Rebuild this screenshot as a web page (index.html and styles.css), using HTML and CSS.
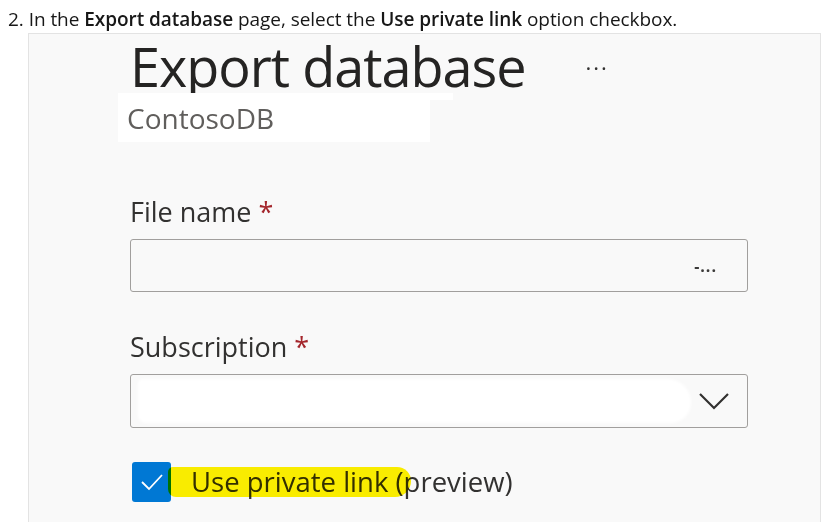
FILE: index.html
```html
<!DOCTYPE html>
<html>

<head>
    <title>Export database</title>
    <meta charset="UTF-8">
    <meta name="viewport" content="width=device-width, initial-scale=1.0">
    <link rel="stylesheet" href="styles.css">
</head>

<body>
    <p class="step">2. In the <b>Export database</b> page, select the <b>Use private link</b> option checkbox.</p>
    <div class="shot">
        <div class="blade">
            <div class="title-row">
                <h1>Export database</h1>
                <span class="more">&middot;&middot;&middot;</span>
            </div>
            <div class="subtitle">ContosoDB</div>

            <div class="field first">
                <label>File name <span class="req">*</span></label>
                <div class="box">
                    <span class="ellipsis">-...</span>
                </div>
            </div>

            <div class="field">
                <label>Subscription <span class="req">*</span></label>
                <div class="box select">
                    <span class="smudge"></span>
                    <svg class="chevron" width="32" height="18" viewBox="0 0 32 18">
                        <path d="M2 2 L16 16 L30 2" fill="none" stroke="#323130" stroke-width="2.2" />
                    </svg>
                </div>
            </div>

            <div class="check-row">
                <span class="checkbox">
                    <svg width="26" height="20" viewBox="0 0 26 20">
                        <path d="M3 10 L10 17 L23 3" fill="none" stroke="#fff" stroke-width="1.8" />
                    </svg>
                </span>
                <span class="check-label">Use private link (preview)</span>
                <!-- highlighter stroke drawn over the screenshot -->
                <span class="marker"></span>
            </div>
        </div>
    </div>
</body>

</html>
```

FILE: styles.css
```css
* {
    margin: 0;
    padding: 0;
    box-sizing: border-box;
}

html,
body {
    height: 522px;
    overflow: hidden;
}

body {
    font-family: "Open Sans", "Noto Sans", sans-serif;
    background-color: #fff;
    color: #171717;
}

.step {
    font-size: 19px;
    line-height: 24px;
    height: 33px;
    padding: 7px 0 0 8px;
    white-space: nowrap;
    letter-spacing: -0.05px;
}

.step b {
    font-weight: 600;
}

.shot {
    margin-left: 28px;
    margin-right: 10px;
    height: 489px;
    background-color: #f9f9f9;
    border: 1px solid #e3e3e3;
    border-bottom: 0;
}

.blade {
    padding-left: 101px;
    padding-right: 72px;
}

.title-row {
    display: flex;
    align-items: flex-start;
}

h1 {
    font-weight: 400;
    font-size: 54px;
    line-height: 53px;
    color: #252423;
    margin-top: 6px;
    letter-spacing: -1px;
    white-space: nowrap;
}

.more {
    margin-left: 60px;
    margin-top: 18px;
    font-size: 22px;
    line-height: 30px;
    letter-spacing: 2px;
    color: #323130;
}

.subtitle {
    position: relative;
    margin-left: -12px;
    width: 312px;
    height: 49px;
    background-color: #fff;
    font-size: 28px;
    line-height: 48px;
    padding-left: 9px;
    padding-top: 1px;
    color: #605e5c;
}

.subtitle::after {
    content: "";
    position: absolute;
    left: 312px;
    top: 0;
    width: 23px;
    height: 7px;
    background-color: #fff;
}

.field {
    margin-top: 37px;
}

.field.first {
    margin-top: 52px;
}

label {
    display: block;
    font-size: 27px;
    line-height: 36px;
    color: #323130;
    margin-bottom: 9px;
}

.req {
    color: #a4262c;
}

.box {
    position: relative;
    height: 53px;
    border: 1px solid #a19f9d;
    border-radius: 3px;
    display: flex;
    align-items: center;
    justify-content: flex-end;
    padding-right: 30px;
}

.ellipsis {
    font-size: 16px;
    font-weight: 700;
    color: #3b3a39;
    letter-spacing: 1px;
}

.select {
    height: 54px;
    padding-right: 17px;
}

.smudge {
    position: absolute;
    left: 7px;
    top: 4px;
    width: 553px;
    height: 44px;
    background-color: #fff;
    border-radius: 6px 30px 26px 10px;
    filter: blur(1.5px);
}

.chevron {
    position: relative;
}

.check-row {
    position: relative;
    display: flex;
    align-items: center;
    gap: 20px;
    margin-top: 34px;
    margin-left: 2px;
}

.checkbox {
    width: 39px;
    height: 40px;
    background-color: #0078d4;
    border-radius: 3px;
    display: flex;
    align-items: center;
    justify-content: center;
}

.check-label {
    font-size: 27.5px;
    line-height: 38px;
    color: #323130;
}

.marker {
    position: absolute;
    left: 36px;
    top: 5px;
    width: 243px;
    height: 30px;
    background-color: #fff200;
    mix-blend-mode: multiply;
    border-radius: 5px 14px 16px 8px;
}
```
